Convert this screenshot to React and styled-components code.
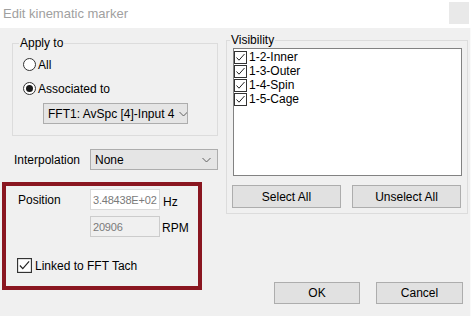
import React from 'react'
import styled, { createGlobalStyle } from 'styled-components'

const GlobalStyle = createGlobalStyle`
  html, body {
    margin: 0;
    padding: 0;
    background: #ffffff;
  }
  body {
    font-family: "Liberation Sans", Arial, sans-serif;
    font-size: 12px;
    color: #000;
  }
`

const Window = styled.div`
  width: 474px;
  height: 316px;
  display: flex;
  flex-direction: column;
  overflow: hidden;
`

const TitleBar = styled.div`
  height: 28px;
  flex: none;
  background: #fff;
  display: flex;
  align-items: flex-start;
  justify-content: space-between;
`

const Title = styled.div`
  font-size: 13px;
  color: #a0a0a0;
  margin: 6px 0 0 3px;
  line-height: 16px;
`

const CloseBox = styled.div`
  width: 20px;
  height: 22px;
  margin: 2px 5px 0 0;
  background: #e9e9e9;
`

const Body = styled.div`
  flex: 1;
  background: #f0f0f0;
  display: flex;
  border-right: 1px solid #fafafa;
  margin-right: 3px;
`

const LeftCol = styled.div`
  width: 216px;
  margin-left: 2px;
  display: flex;
  flex-direction: column;
`

const RightCol = styled.div`
  width: 242px;
  margin-left: 8px;
  display: flex;
  flex-direction: column;
`

const Group = styled.fieldset`
  margin: ${p => p.$top}px 0 0 ${p => p.$left}px;
  padding: ${p => p.$pad};
  border: 1px solid #dcdcdc;
  height: ${p => p.$height}px;
  box-sizing: border-box;
  min-width: 0;
`

const Legend = styled.legend`
  padding: 0 1px;
  margin-left: ${p => p.$offset}px;
  line-height: 14px;
  height: 14px;
`

const GroupInner = styled.div`
  padding-left: ${p => p.$left}px;
  padding-right: ${p => p.$right || 0}px;
  display: flex;
  flex-direction: column;
`

const OptionRow = styled.div`
  display: flex;
  align-items: center;
  height: 13px;
  margin-top: ${p => p.$gap || 0}px;
  gap: 2px;
  line-height: 14px;
`

const Radio = styled.span`
  width: 13px;
  height: 13px;
  box-sizing: border-box;
  border: 1px solid #333;
  border-radius: 50%;
  background: #fff;
  display: flex;
  align-items: center;
  justify-content: center;
  flex: none;
  &::after {
    content: '';
    display: ${p => (p.$checked ? 'block' : 'none')};
    width: 7px;
    height: 7px;
    border-radius: 50%;
    background: #1a1a1a;
  }
`

const Combo = styled.div`
  width: ${p => p.$width}px;
  height: 21px;
  box-sizing: border-box;
  margin: ${p => p.$margin || 0};
  background: #e5e5e5;
  border: 1px solid #adadad;
  display: flex;
  align-items: center;
  justify-content: space-between;
  padding: 0 6px 0 4px;
  flex: none;
  white-space: nowrap;
  overflow: hidden;
`

const Chevron = () => (
  <svg width="9" height="6" viewBox="0 0 9 6" style={{ flex: 'none', marginLeft: 4 }}>
    <path d="M0.5 1 L4.5 5 L8.5 1" fill="none" stroke="#606060" strokeWidth="1" />
  </svg>
)

const FieldRow = styled.div`
  display: flex;
  align-items: center;
  margin-top: ${p => p.$top || 0}px;
`

const Label = styled.div`
  width: ${p => p.$width}px;
  flex: none;
  padding-left: ${p => p.$pad || 0}px;
  line-height: 14px;
`

const Highlight = styled.div`
  margin-top: 12px;
  width: 200px;
  height: 108px;
  box-sizing: border-box;
  border: 4px solid #8a1620;
  padding: 3px 0 0 12px;
  display: flex;
  flex-direction: column;
`

const TextBox = styled.div`
  width: 70px;
  height: 21px;
  box-sizing: border-box;
  border: 1px solid ${p => (p.$disabled ? '#cccccc' : '#d9d9d9')};
  background: ${p => (p.$disabled ? '#f0f0f0' : '#ffffff')};
  color: #7a7a7a;
  font-size: 11px;
  letter-spacing: -0.2px;
  display: flex;
  align-items: center;
  padding-left: 2px;
  flex: none;
  white-space: nowrap;
  overflow: hidden;
`

const Unit = styled.span`
  margin-left: ${p => p.$ml}px;
  margin-top: ${p => p.$mt || 0}px;
`

const CheckRow = styled.div`
  display: flex;
  align-items: center;
  gap: ${p => p.$gap}px;
  height: ${p => p.$height}px;
  margin-top: ${p => p.$top || 0}px;
  margin-left: ${p => p.$left || 0}px;
  line-height: 14px;
`

const Check = ({ size = 13 }) => (
  <svg width={size} height={size} viewBox="0 0 13 13" style={{ flex: 'none' }}>
    <rect x="0.5" y="0.5" width="12" height="12" fill="#fff" stroke="#333" />
    <path d="M2.5 6.5 L5 9.2 L10.5 3" fill="none" stroke="#222" strokeWidth="1" />
  </svg>
)

const ListBox = styled.div`
  width: 229px;
  height: 128px;
  box-sizing: border-box;
  border: 1px solid #828282;
  background: #fff;
  padding: 1px 0 0 0;
  display: flex;
  flex-direction: column;
`

const ButtonRow = styled.div`
  display: flex;
  gap: ${p => p.$gap}px;
  margin: ${p => p.$margin};
  justify-content: ${p => p.$justify || 'flex-start'};
`

const Button = styled.div`
  width: ${p => p.$width}px;
  height: ${p => p.$height}px;
  box-sizing: border-box;
  background: #e1e1e1;
  border: 1px solid #adadad;
  display: flex;
  align-items: center;
  justify-content: center;
  font-size: 12px;
  color: #000;
`

const visibility = ['1-2-Inner', '1-3-Outer', '1-4-Spin', '1-5-Cage']

export default function App() {
  return (
    <Window>
      <GlobalStyle />
      <TitleBar>
        <Title>Edit kinematic marker</Title>
        <CloseBox />
      </TitleBar>
      <Body>
        <LeftCol>
          <Group $top={8} $left={10} $height={100} $pad="8px 0 0 0">
            <Legend $offset={6}>Apply to</Legend>
            <GroupInner $left={10}>
              <OptionRow>
                <Radio />
                <span>All</span>
              </OptionRow>
              <OptionRow $gap={11}>
                <Radio $checked />
                <span>Associated to</span>
              </OptionRow>
              <Combo $width={145} $margin="8px 0 0 20px">
                <span>FFT1: AvSpc [4]-Input 4</span>
                <Chevron />
              </Combo>
            </GroupInner>
          </Group>

          <FieldRow $top={13}>
            <Label $width={76} $pad={12}>Interpolation</Label>
            <Combo $width={128}>
              <span>None</span>
              <Chevron />
            </Combo>
          </FieldRow>

          <Highlight>
            <FieldRow>
              <Label $width={72}>Position</Label>
              <TextBox>3.48438E+02</TextBox>
              <Unit $ml={3} $mt={4}>Hz</Unit>
            </FieldRow>
            <FieldRow $top={6}>
              <Label $width={72} />
              <TextBox $disabled>20906</TextBox>
              <Unit $ml={2} $mt={2}>RPM</Unit>
            </FieldRow>
            <CheckRow $gap={3} $height={15} $top={21} $left={-1}>
              <Check size={15} />
              <span>Linked to FFT Tach</span>
            </CheckRow>
          </Highlight>
        </LeftCol>

        <RightCol>
          <Group $top={5} $left={0} $height={181} $pad="1px 0 5px 0">
            <Legend $offset={3}>Visibility</Legend>
            <GroupInner $left={6} $right={5}>
              <ListBox>
                {visibility.map(v => (
                  <CheckRow key={v} $gap={2} $height={14}>
                    <Check />
                    <span>{v}</span>
                  </CheckRow>
                ))}
              </ListBox>
              <ButtonRow $gap={11} $margin="9px 0 0 -1px">
                <Button $width={109} $height={23}>Select All</Button>
                <Button $width={109} $height={23}>Unselect All</Button>
              </ButtonRow>
            </GroupInner>
          </Group>
          <ButtonRow $gap={16} $margin="68px 5px 0 0" $justify="flex-end">
            <Button $width={86} $height={22}>OK</Button>
            <Button $width={87} $height={22}>Cancel</Button>
          </ButtonRow>
        </RightCol>
      </Body>
    </Window>
  )
}
